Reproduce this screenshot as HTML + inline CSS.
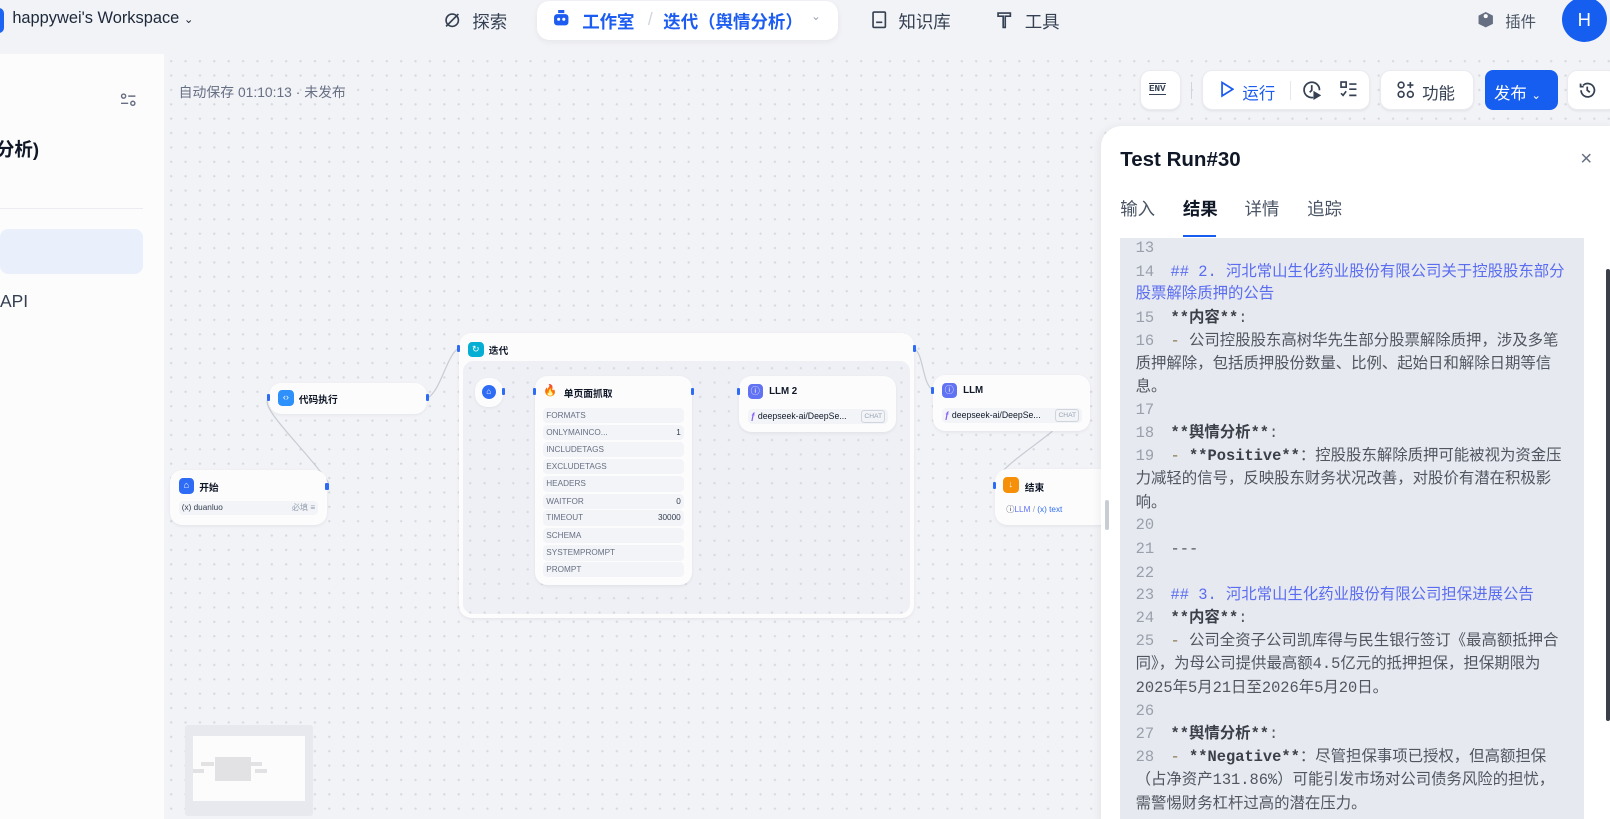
<!DOCTYPE html>
<html><head><meta charset="utf-8">
<style>
*{box-sizing:border-box;margin:0;padding:0}
html,body{width:1610px;height:819px;overflow:hidden;background:#f2f3f7}
body{font-family:"Liberation Sans","Noto Sans CJK SC",sans-serif;color:#1d2939}
#root{position:relative;width:1568px;height:798px;zoom:1.02679;overflow:hidden}
.abs{position:absolute}
.top{left:0;top:0;width:1568px;height:53px;background:#f2f3f7}
.nav{font-size:17px;color:#354052;top:9px}
.canvas{left:160px;top:53px;width:1408px;height:745px;background-color:#f2f3f7;background-image:radial-gradient(#d6d9e0 1px,transparent 1.2px);background-size:14px 14px}
.side{left:0;top:53px;width:160px;height:745px;background:#fcfcfd}
.node{position:absolute;background:#fcfcfd;border-radius:12px;box-shadow:0 1px 3px rgba(16,24,40,.06)}
.ic{position:absolute;width:15px;height:15px;border-radius:4px;color:#fff;font-size:9px;text-align:center;line-height:15px}
.nt{position:absolute;font-size:9.5px;font-weight:bold;color:#101828}
.row{position:absolute;left:8px;right:8px;height:15px;background:#f2f4f7;border-radius:4px;font-size:8px;color:#676f83;line-height:15px;padding:0 3px}
.row span{float:right;color:#354052}
.hd{position:absolute;width:3px;height:7px;background:#2e6cf6;border-radius:1px}
.btn{position:absolute;top:68px;height:39px;background:#fff;border-radius:10px;box-shadow:0 1px 2px rgba(0,0,0,.06);border:1px solid #e9ebf0}
.code{left:1091px;top:232px;width:452px;height:566px;background:#e6e9ef}
.ln{position:absolute;left:1106px;font-size:15px;line-height:22.6px;white-space:nowrap;color:#50555f;font-family:"Liberation Mono","Noto Sans CJK SC",monospace}
.ln i{font-style:normal;color:#9aa0ab;display:inline-block;width:34px}
.h{color:#5a6cf0}
.b{font-weight:bold;color:#3b3f48}
.d{color:#8a7a50}
</style></head><body><div id="root">
<div class="abs top"></div>
<div class="abs" style="left:-8px;top:8px;width:12px;height:24px;background:#1c64f2;border-radius:5px"></div>
<div class="abs" style="left:12px;top:9px;font-size:16px;color:#1d2939">happywei's Workspace <span style="font-size:11px">&#8964;</span></div>
<svg class="abs" style="left:431px;top:11px" width="18" height="18" viewBox="0 0 18 18" fill="none" stroke="#354052" stroke-width="1.6"><circle cx="9" cy="9" r="6"/><path d="M3 15 L15 3"/></svg>
<div class="abs nav" style="left:460px">探索</div>
<div class="abs" style="left:523px;top:1px;width:293px;height:38px;background:#fff;border-radius:12px;box-shadow:0 2px 6px rgba(0,0,0,.06)"></div>
<svg class="abs" style="left:538px;top:10px" width="18" height="18" viewBox="0 0 18 18"><rect x="6" y="0" width="6" height="3" fill="#1c5cf0"/><rect x="2" y="4" width="14" height="11" rx="3" fill="#1c5cf0"/><circle cx="6.5" cy="9" r="1.5" fill="#fff"/><circle cx="11.5" cy="9" r="1.5" fill="#fff"/></svg>
<div class="abs" style="left:567px;top:9px;font-size:17px;font-weight:bold;color:#1c5cf0">工作室</div>
<div class="abs" style="left:631px;top:9px;font-size:17px;color:#d0d5dd">/</div>
<div class="abs" style="left:646px;top:9px;font-size:17px;font-weight:bold;color:#1c5cf0">迭代（舆情分析）</div>
<div class="abs" style="left:790px;top:10px;font-size:11px;color:#98a2b3">&#8964;</div>
<svg class="abs" style="left:848px;top:11px" width="16" height="17" viewBox="0 0 16 17" fill="none" stroke="#354052" stroke-width="1.6"><rect x="2" y="1" width="12" height="15" rx="1"/><path d="M5 11h6"/></svg>
<div class="abs nav" style="left:875px">知识库</div>
<svg class="abs" style="left:970px;top:11px" width="16" height="17" viewBox="0 0 16 17" fill="none" stroke="#354052" stroke-width="1.6"><path d="M2 2h12v3H9v11H7V5H2z"/></svg>
<div class="abs nav" style="left:998px">工具</div>
<svg class="abs" style="left:1438px;top:11px" width="17" height="17" viewBox="0 0 17 17"><path d="M8.5 1l7 3.5v8l-7 3.5-7-3.5v-8z" fill="#676f83"/><circle cx="8.5" cy="5" r="2" fill="#fff"/></svg>
<div class="abs" style="left:1466px;top:10px;font-size:15px;color:#495464">插件</div>
<div class="abs" style="left:1521px;top:-3px;width:44px;height:44px;border-radius:50%;background:#155eef;color:#fff;font-size:18px;text-align:center;line-height:44px">H</div>

<div class="abs side"></div>
<svg class="abs" style="left:117px;top:90px" width="16" height="16" viewBox="0 0 16 16" fill="none" stroke="#676f83" stroke-width="1.4"><circle cx="3.5" cy="4" r="2"/><path d="M8 4h7M1 11h7"/><circle cx="12.5" cy="11" r="2"/></svg>
<div class="abs" style="left:-4px;top:132px;font-size:18px;font-weight:bold;color:#101828">分析)</div>
<div class="abs" style="left:0;top:203px;width:139px;height:1px;background:#eaecf0"></div>
<div class="abs" style="left:0;top:223px;width:139px;height:44px;background:#eaf0fb;border-radius:8px"></div>
<div class="abs" style="left:0;top:283px;font-size:17px;color:#354052">API</div>

<div class="abs canvas"></div>
<div class="abs" style="left:174px;top:79px;font-size:13.5px;color:#676f83">自动保存 01:10:13 · 未发布</div>

<svg class="abs" style="left:0;top:0" width="1568" height="798" fill="none" stroke="#c8ccd4" stroke-width="1.2">
<path d="M262 388 C250 395 300 440 320 470"/>
<path d="M416 388 C430 380 435 345 447 339"/>
<path d="M490 381 L521 381"/>
<path d="M674 381 L720 381"/>
<path d="M890 339 C900 345 898 375 909 380"/>
<path d="M1025 420 C1000 440 975 455 969 470"/>
</svg>

<div class="node" style="left:166px;top:458px;width:152px;height:53px"></div>
<div class="ic" style="left:174px;top:466px;background:#2e6cf6">⌂</div>
<div class="nt" style="left:194px;top:467px">开始</div>
<div class="row" style="left:174px;top:488px;width:136px;height:14px;line-height:14px;color:#354052">(x) duanluo<span style="color:#98a2b3">必填 ≡</span></div>
<div class="hd" style="left:317px;top:470px"></div>
<div class="node" style="left:262px;top:373px;width:154px;height:30px"></div>
<div class="ic" style="left:271px;top:380px;background:#2e90fa">‹›</div>
<div class="nt" style="left:291px;top:382px">代码执行</div>
<div class="hd" style="left:260px;top:384px"></div><div class="hd" style="left:415px;top:384px"></div>
<div class="node" style="left:447px;top:324px;width:443px;height:278px"></div>
<div class="abs" style="left:451px;top:352px;width:435px;height:246px;background:#eef0f5;background-image:radial-gradient(#d6d9e0 1px,transparent 1.2px);background-size:14px 14px;border-radius:10px"></div>
<div class="ic" style="left:456px;top:333px;background:#06aed4">↻</div>
<div class="nt" style="left:476px;top:334px">迭代</div>
<div class="hd" style="left:445px;top:336px"></div><div class="hd" style="left:889px;top:336px"></div>
<div class="node" style="left:463px;top:368px;width:27px;height:28px"></div>
<div class="abs" style="left:469px;top:375px;width:14px;height:14px;border-radius:50%;background:#2e6cf6;color:#fff;font-size:8px;text-align:center;line-height:14px">⌂</div>
<div class="hd" style="left:489px;top:378px"></div>
<div class="node" style="left:521px;top:366px;width:153px;height:204px"></div>
<div class="hd" style="left:519px;top:378px"></div><div class="hd" style="left:673px;top:378px"></div>
<div class="abs" style="left:529px;top:374px;font-size:11px">🔥</div>
<div class="nt" style="left:549px;top:376px">单页面抓取</div>
<div class="row" style="left:529px;top:397px;width:137px">FORMATS</div>
<div class="row" style="left:529px;top:414px;width:137px">ONLYMAINCO...<span>1</span></div>
<div class="row" style="left:529px;top:430px;width:137px">INCLUDETAGS</div>
<div class="row" style="left:529px;top:447px;width:137px">EXCLUDETAGS</div>
<div class="row" style="left:529px;top:464px;width:137px">HEADERS</div>
<div class="row" style="left:529px;top:481px;width:137px">WAITFOR<span>0</span></div>
<div class="row" style="left:529px;top:497px;width:137px">TIMEOUT<span>30000</span></div>
<div class="row" style="left:529px;top:514px;width:137px">SCHEMA</div>
<div class="row" style="left:529px;top:531px;width:137px">SYSTEMPROMPT</div>
<div class="row" style="left:529px;top:547px;width:137px">PROMPT</div>
<div class="node" style="left:720px;top:366px;width:153px;height:55px"></div>
<div class="hd" style="left:718px;top:378px"></div>
<div class="ic" style="left:728px;top:374px;background:#6172f3">ⓘ</div>
<div class="nt" style="left:749px;top:376px">LLM 2</div>
<div class="row" style="left:728px;top:398px;width:137px;color:#101828;font-size:8.5px"><b style="color:#875bf7">ƒ</b> deepseek-ai/DeepSe...<span style="border:1px solid #d0d5dd;border-radius:3px;font-size:6.5px;color:#98a2b3;line-height:11px;margin-top:1px;padding:0 2px">CHAT</span></div>
<div class="node" style="left:909px;top:365px;width:153px;height:55px"></div>
<div class="hd" style="left:907px;top:377px"></div>
<div class="ic" style="left:917px;top:373px;background:#6172f3">ⓘ</div>
<div class="nt" style="left:938px;top:375px">LLM</div>
<div class="row" style="left:917px;top:397px;width:137px;color:#101828;font-size:8.5px"><b style="color:#875bf7">ƒ</b> deepseek-ai/DeepSe...<span style="border:1px solid #d0d5dd;border-radius:3px;font-size:6.5px;color:#98a2b3;line-height:11px;margin-top:1px;padding:0 2px">CHAT</span></div>
<div class="node" style="left:969px;top:457px;width:120px;height:54px"></div>
<div class="hd" style="left:967px;top:469px"></div>
<div class="ic" style="left:977px;top:465px;background:#f79009">↓</div>
<div class="nt" style="left:998px;top:467px">结束</div>
<div class="abs" style="left:980px;top:490px;font-size:8px;color:#354052">ⓘ<span style="color:#6172f3">LLM</span> <span style="color:#98a2b3">/</span> <span style="color:#2e6cf6">(x) text</span></div>

<div class="abs" style="left:180px;top:706px;width:125px;height:89px;background:#e8e9ee;border-radius:3px"></div>
<div class="abs" style="left:188px;top:717px;width:109px;height:63px;background:#fcfcfd"></div>
<div class="abs" style="left:209px;top:737px;width:35px;height:24px;background:#e2e2e4"></div>
<div class="abs" style="left:196px;top:742px;width:12px;height:4px;background:#e2e2e4"></div>
<div class="abs" style="left:188px;top:749px;width:11px;height:4px;background:#e2e2e4"></div>
<div class="abs" style="left:244px;top:742px;width:11px;height:4px;background:#e2e2e4"></div>
<div class="abs" style="left:248px;top:749px;width:12px;height:4px;background:#e2e2e4"></div>

<div class="btn" style="left:1110px;width:40px"></div>
<div class="abs" style="left:1119px;top:81px;font-size:9px;font-weight:bold;color:#354052;font-family:'Liberation Mono',monospace;border-top:1.5px solid #354052;border-bottom:1.5px solid #354052;line-height:10px">ENV</div>
<div class="abs" style="left:1160px;top:80px;width:1px;height:16px;background:#d0d5dd"></div>
<div class="btn" style="left:1171px;width:163px"></div>
<svg class="abs" style="left:1188px;top:79px" width="14" height="16" viewBox="0 0 14 16" fill="none" stroke="#1c5cf0" stroke-width="1.7"><path d="M2 1.5 L12.5 8 L2 14.5 Z"/></svg>
<div class="abs" style="left:1210px;top:78px;font-size:16px;color:#1c5cf0">运行</div>
<div class="abs" style="left:1256px;top:79px;width:1px;height:18px;background:#e4e7ec"></div>
<svg class="abs" style="left:1268px;top:78px" width="19" height="19" viewBox="0 0 19 19" fill="none" stroke="#354052" stroke-width="1.7"><path d="M11 17 A7.5 7.5 0 1 1 17 10"/><path d="M9.5 5v5l-2 2"/><path d="M12 12 L17 15 L12 18Z" fill="#354052"/></svg>
<svg class="abs" style="left:1305px;top:79px" width="17" height="17" viewBox="0 0 17 17" fill="none" stroke="#354052" stroke-width="1.6"><rect x="1" y="1" width="5" height="5"/><path d="M9 3h7M9 8h7M9 14h7M1 12l2 2 3-4"/></svg>
<div class="btn" style="left:1344px;width:92px"></div>
<svg class="abs" style="left:1361px;top:79px" width="17" height="17" viewBox="0 0 17 17" fill="none" stroke="#354052" stroke-width="1.6"><circle cx="4" cy="4" r="2.8"/><circle cx="4" cy="13" r="2.8"/><circle cx="13" cy="13" r="2.8"/><path d="M13 1v6M10 4h6"/></svg>
<div class="abs" style="left:1385px;top:78px;font-size:16px;color:#354052">功能</div>
<div class="abs" style="left:1446px;top:68px;width:71px;height:39px;background:#155eef;border-radius:8px"></div>
<div class="abs" style="left:1455px;top:78px;font-size:16px;color:#fff">发布 <span style="font-size:11px">&#8964;</span></div>
<div class="btn" style="left:1526px;width:50px"></div>
<svg class="abs" style="left:1537px;top:79px" width="18" height="18" viewBox="0 0 18 18" fill="none" stroke="#354052" stroke-width="1.7"><path d="M3 9 A6.5 6.5 0 1 0 5 4.3"/><path d="M2.5 2.5v3h3"/><path d="M9 5.5V9l2.5 2"/></svg>

<div class="abs" style="left:1072px;top:123px;width:500px;height:680px;background:#fff;border-radius:20px 0 0 0;box-shadow:-2px 0 8px rgba(0,0,0,.05)"></div>
<div class="abs" style="left:1091px;top:144px;font-size:20px;font-weight:bold;color:#101828">Test Run#30</div>
<div class="abs" style="left:1539px;top:143px;font-size:20px;color:#676f83">×</div>
<div class="abs" style="left:1091px;top:191px;font-size:17px;color:#495464">输入</div>
<div class="abs" style="left:1152px;top:191px;font-size:17px;color:#101828;font-weight:bold">结果</div>
<div class="abs" style="left:1212px;top:191px;font-size:17px;color:#495464">详情</div>
<div class="abs" style="left:1273px;top:191px;font-size:17px;color:#495464">追踪</div>
<div class="abs" style="left:1152px;top:229px;width:32px;height:2px;background:#155eef"></div>
<div class="abs code"></div>
<div class="abs" style="left:1076px;top:487px;width:4px;height:29px;background:#c8ccd4;border-radius:2px"></div>
<div class="abs" style="left:1564px;top:262px;width:4px;height:440px;background:#3a3f48;border-radius:2px"></div>

<div class="ln" style="top:231px"><i>13</i></div>
<div class="ln" style="top:254px"><i>14</i><span class="h">## 2. 河北常山生化药业股份有限公司关于控股股东部分</span></div>
<div class="ln h" style="top:276px">股票解除质押的公告</div>
<div class="ln" style="top:299px"><i>15</i><span class="b">**内容**</span>:</div>
<div class="ln" style="top:321px"><i>16</i><span class="d">-</span> 公司控股股东高树华先生部分股票解除质押，涉及多笔</div>
<div class="ln" style="top:344px">质押解除，包括质押股份数量、比例、起始日和解除日期等信</div>
<div class="ln" style="top:366px">息。</div>
<div class="ln" style="top:389px"><i>17</i></div>
<div class="ln" style="top:411px"><i>18</i><span class="b">**舆情分析**</span>:</div>
<div class="ln" style="top:433px"><i>19</i><span class="d">-</span> <span class="b">**Positive**</span>：控股股东解除质押可能被视为资金压</div>
<div class="ln" style="top:456px">力减轻的信号，反映股东财务状况改善，对股价有潜在积极影</div>
<div class="ln" style="top:479px">响。</div>
<div class="ln" style="top:501px"><i>20</i></div>
<div class="ln" style="top:524px"><i>21</i>---</div>
<div class="ln" style="top:547px"><i>22</i></div>
<div class="ln" style="top:569px"><i>23</i><span class="h">## 3. 河北常山生化药业股份有限公司担保进展公告</span></div>
<div class="ln" style="top:591px"><i>24</i><span class="b">**内容**</span>:</div>
<div class="ln" style="top:614px"><i>25</i><span class="d">-</span> 公司全资子公司凯库得与民生银行签订《最高额抵押合</div>
<div class="ln" style="top:636px">同》，为母公司提供最高额4.5亿元的抵押担保，担保期限为</div>
<div class="ln" style="top:659px">2025年5月21日至2026年5月20日。</div>
<div class="ln" style="top:682px"><i>26</i></div>
<div class="ln" style="top:704px"><i>27</i><span class="b">**舆情分析**</span>:</div>
<div class="ln" style="top:727px"><i>28</i><span class="d">-</span> <span class="b">**Negative**</span>：尽管担保事项已授权，但高额担保</div>
<div class="ln" style="top:749px">（占净资产131.86%）可能引发市场对公司债务风险的担忧，</div>
<div class="ln" style="top:772px">需警惕财务杠杆过高的潜在压力。</div>
</div></body></html>
